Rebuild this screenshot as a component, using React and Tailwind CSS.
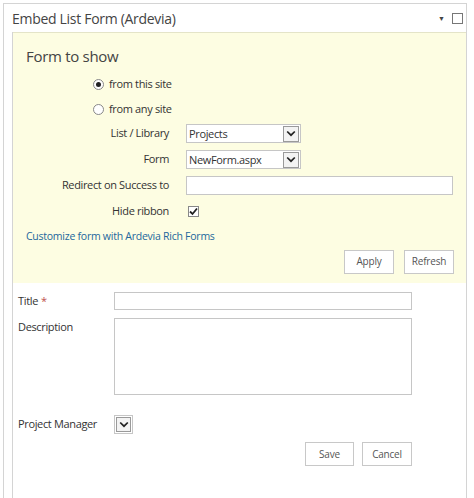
import React from "react";

const font = { fontFamily: '"Segoe UI", "Open Sans", "Noto Sans", sans-serif' };
const lbl = "text-[11px] tracking-[-0.35px] text-[#333]";

function Arrow({ className = "w-[16px] h-[16px]" }) {
  return (
    <div className={"flex items-center justify-center border border-[#9a9a9a] bg-[#f3f3f3] " + className}>
      <svg width="10" height="7" viewBox="0 0 10 7">
        <path d="M1.2 1.5 L5 5.2 L8.8 1.5" fill="none" stroke="#222" strokeWidth="1.7" />
      </svg>
    </div>
  );
}

function Select({ value }) {
  return (
    <div className="flex items-center justify-between w-[115px] h-[19px] border border-[#c6c6c6] bg-white pl-[2px] pr-[1px]">
      <span className={"leading-none " + lbl}>{value}</span>
      <Arrow />
    </div>
  );
}

function Btn({ children, w = "w-[50px]" }) {
  return (
    <div className={"h-[24px] border border-[#c8c8c8] bg-white flex items-center justify-center text-[10px] tracking-[-0.2px] text-[#555] " + w}>
      {children}
    </div>
  );
}

export default function App() {
  return (
    <div className="w-[474px] h-[498px] bg-white pt-[3px] pl-[3px] overflow-hidden" style={font}>
      <div className="w-[464px] h-[495px] border-t border-l border-r border-[#d4d4d4] flex flex-col">
        <div className="h-[28px] flex items-center justify-between pl-[8px] pr-[3px] shrink-0">
          <span className="text-[14px] tracking-[-0.3px] text-[#444] leading-none pt-[1px]">Embed List Form (Ardevia)</span>
          <div className="flex items-center gap-[7px] pt-[1px]">
            <span className="text-[7px] text-[#444] leading-none">▼</span>
            <div className="w-[11px] h-[11px] border border-[#777]"></div>
          </div>
        </div>
        <div className="ml-[8px] flex-1 border-l border-[#d4d4d4] flex flex-col">
          <div className="bg-[#fdfde2] border-t border-[#e4e4c8] h-[251px] pl-[13px] pt-[16px]">
            <div className="text-[15px] tracking-[-0.3px] text-[#444] leading-none">Form to show</div>
            <div className="flex items-center gap-[5px] ml-[67px] mt-[12px] h-[16px]">
              <div className="w-[11px] h-[11px] rounded-full border border-[#888] bg-white flex items-center justify-center">
                <div className="w-[5px] h-[5px] rounded-full bg-[#222]"></div>
              </div>
              <span className={lbl}>from this site</span>
            </div>
            <div className="flex items-center gap-[5px] ml-[67px] mt-[9px] h-[16px]">
              <div className="w-[11px] h-[11px] rounded-full border border-[#888] bg-white"></div>
              <span className={lbl}>from any site</span>
            </div>
            <div className="grid grid-cols-[143px_1fr] gap-x-[17px] items-center mt-[7px]">
              <div className={"text-right h-[19px] flex items-center justify-end " + lbl}>List / Library</div>
              <Select value="Projects" />
              <div className={"text-right h-[19px] mt-[7px] flex items-center justify-end " + lbl}>Form</div>
              <div className="mt-[7px]"><Select value="NewForm.aspx" /></div>
              <div className={"text-right h-[19px] mt-[7px] flex items-center justify-end " + lbl}>Redirect on Success to</div>
              <div className="mt-[7px] w-[267px] h-[19px] border border-[#c6c6c6] bg-white"></div>
              <div className={"text-right h-[19px] mt-[7px] flex items-center justify-end " + lbl}>Hide ribbon</div>
              <div className="mt-[7px] h-[19px] flex items-center pl-[2px]">
                <div className="w-[11px] h-[11px] border border-[#888] bg-white flex items-center justify-center">
                  <svg width="9" height="9" viewBox="0 0 9 9">
                    <path d="M1 4.5 L3.5 7 L8 1.5" fill="none" stroke="#222" strokeWidth="1.8" />
                  </svg>
                </div>
              </div>
            </div>
            <div className="mt-[8px] text-[10.5px] tracking-[-0.25px] text-[#23679c]">Customize form with Ardevia Rich Forms</div>
            <div className="flex justify-end gap-[10px] pr-[12px] mt-[5px]">
              <Btn>Apply</Btn>
              <Btn>Refresh</Btn>
            </div>
          </div>
          <div className="pl-[5px] pt-[9px]">
            <div className="flex items-start">
              <div className={"w-[96px] h-[18px] flex items-center " + lbl}>
                Title<span className="text-[#c0504d] ml-[3px]">*</span>
              </div>
              <div className="w-[298px] h-[18px] border border-[#c6c6c6] bg-white"></div>
            </div>
            <div className="flex items-start mt-[8px]">
              <div className={"w-[96px] h-[18px] flex items-center " + lbl}>Description</div>
              <div className="w-[298px] h-[77px] border border-[#c6c6c6] bg-white"></div>
            </div>
            <div className="flex items-center mt-[20px]">
              <div className={"w-[96px] h-[19px] flex items-center " + lbl}>Project Manager</div>
              <div className="w-[19px] h-[19px] border border-[#c6c6c6] bg-white flex items-center justify-end pr-[1px]">
                <Arrow className="w-[15px] h-[15px]" />
              </div>
            </div>
            <div className="flex justify-end gap-[8px] w-[394px] mt-[8px]">
              <Btn w="w-[49px]">Save</Btn>
              <Btn w="w-[50px]">Cancel</Btn>
            </div>
          </div>
        </div>
      </div>
    </div>
  );
}
